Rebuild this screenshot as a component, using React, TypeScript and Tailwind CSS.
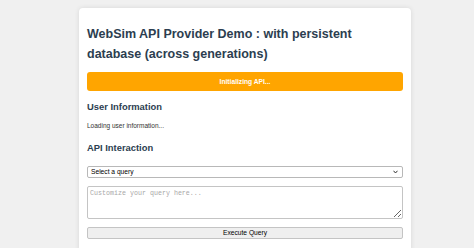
export default function App() {
  return (
    <div className="h-screen overflow-hidden bg-[#f0f0f0] pt-2 pl-[79px] font-['Liberation_Sans',Arial,sans-serif]">
      {/* Main card */}
      <div className="w-[332px] h-[245px] bg-white rounded-t-[4px] shadow-[0_0_5px_rgba(0,0,0,0.1)] px-2 pt-[15.5px]">
        <h1 className="text-[12.5px] leading-[20px] font-bold text-[#2c3e50]">
          WebSim API Provider Demo : with persistent database (across generations)
        </h1>

        {/* Status bar */}
        <div className="mt-[8.5px] h-[19px] bg-[#ffa500] rounded-[3px] flex items-center justify-center text-white text-[6.67px] font-bold">
          Initializing API...
        </div>

        <h2 className="mt-[8px] text-[9.4px] leading-[15px] font-bold text-[#2c3e50]">
          User Information
        </h2>
        <p className="mt-[6.5px] text-[6.5px] leading-[10.4px] text-[#333]">
          Loading user information...
        </p>

        <h2 className="mt-[9px] text-[9.4px] leading-[15px] font-bold text-[#2c3e50]">
          API Interaction
        </h2>

        {/* Query select */}
        <div className="mt-[11px] h-[12px] border border-[#b8b8b8] rounded-[2px] bg-white flex items-center justify-between pl-[3px] pr-[3px] text-[6.67px] text-black">
          <span>Select a query</span>
          <svg width="5" height="4" viewBox="0 0 10 8" className="mr-[1px]">
            <path d="M1 1.5 L5 6 L9 1.5" fill="none" stroke="#333" strokeWidth="2" />
          </svg>
        </div>

        <textarea
          className="block mt-[8px] w-full h-[33px] border border-[#c4c4c4] rounded-[2px] px-[2px] py-[2px] text-[6.67px] leading-[9px] font-['Liberation_Mono',monospace] placeholder:text-[#a8a8a8] outline-none"
          placeholder="Customize your query here..."
        />

        <button className="block mt-[8.5px] w-full h-[12px] bg-[#efefef] border border-[#c4c4c4] rounded-[2px] text-[6.67px] leading-none text-black">
          Execute Query
        </button>
      </div>
    </div>
  );
}
